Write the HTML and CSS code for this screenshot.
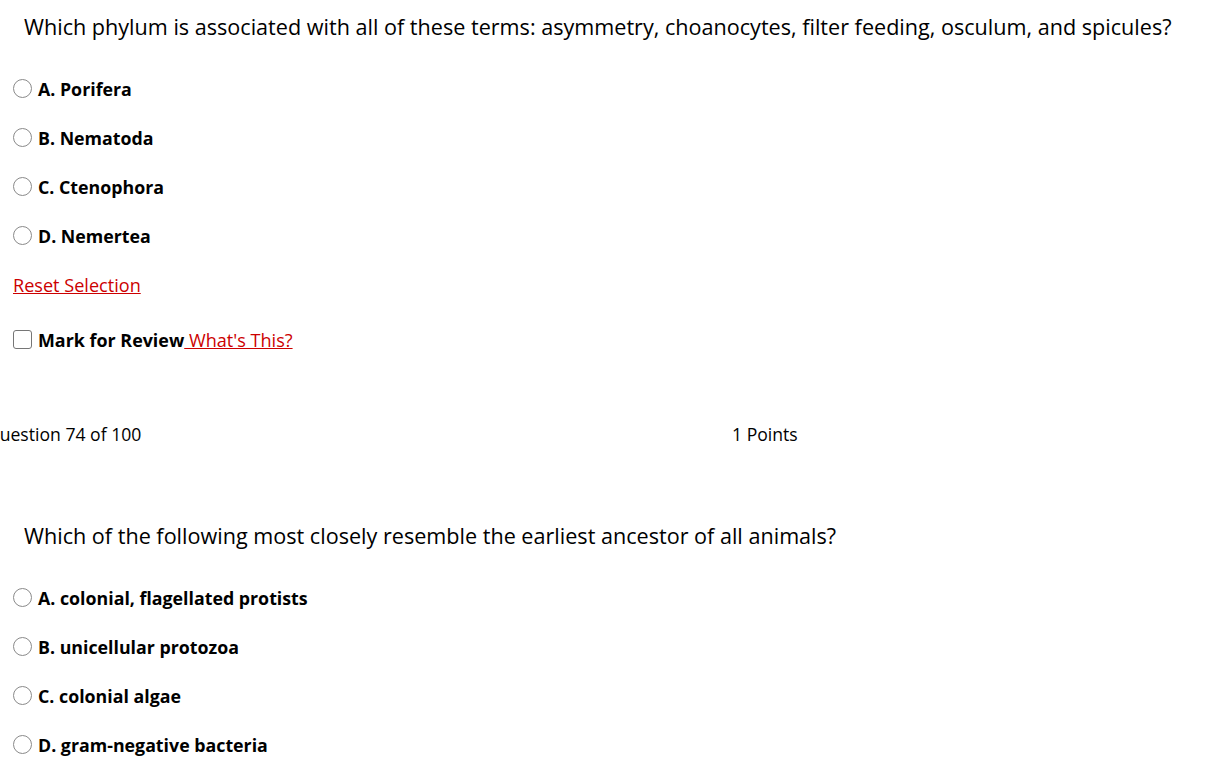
FILE: index.html
```html
<!DOCTYPE html>
<html lang="en">
<head>
    <meta charset="UTF-8">
    <meta name="viewport" content="width=device-width, initial-scale=1.0">
    <title>Quiz</title>
    <link rel="stylesheet" href="styles.css">
</head>
<body>
    <div class="question">
        <p class="question-text">Which phylum is associated with all of these terms: asymmetry, choanocytes, filter feeding, osculum, and spicules?</p>
        <label class="option"><input type="radio" name="q73"> A. Porifera</label>
        <label class="option"><input type="radio" name="q73"> B. Nematoda</label>
        <label class="option"><input type="radio" name="q73"> C. Ctenophora</label>
        <label class="option"><input type="radio" name="q73"> D. Nemertea</label>
        <div class="reset"><a href="#">Reset Selection</a></div>
        <div class="review">
            <label><input type="checkbox"> Mark for Review</label><a href="#">&nbsp;What's This?</a>
        </div>
    </div>

    <div class="question">
        <div class="q-header">
            <span class="q-num">Question 74 of 100</span>
            <span class="q-points">1 Points</span>
        </div>
        <p class="question-text">Which of the following most closely resemble the earliest ancestor of all animals?</p>
        <label class="option"><input type="radio" name="q74"> A. colonial, flagellated protists</label>
        <label class="option"><input type="radio" name="q74"> B. unicellular protozoa</label>
        <label class="option"><input type="radio" name="q74"> C. colonial algae</label>
        <label class="option"><input type="radio" name="q74"> D. gram-negative bacteria</label>
    </div>
</body>
</html>
```

FILE: styles.css
```css
body {
    font-family: "Open Sans", "Noto Sans", sans-serif;
    margin: 0;
    padding: 0 13px;
    background-color: #fff;
    color: #000;
    overflow: hidden;
}
.question-text {
    margin: 12px 0 22px;
    padding-left: 11px;
    font-size: 21.6px;
    line-height: 30px;
}
.option {
    display: flex;
    align-items: center;
    height: 49px;
    padding-top: 1px;
    box-sizing: border-box;
    font-size: 17.8px;
    font-weight: bold;
}
.option input,
.review input {
    appearance: none;
    width: 19px;
    height: 19px;
    margin: 0 6px 0 0;
    border: 1px solid #8a8a8a;
    border-radius: 50%;
    background: #fff;
}
.option input {
    margin-top: -1px;
}
.review input {
    border-radius: 3px;
    border-color: #767676;
}
.reset {
    display: flex;
    align-items: center;
    height: 49px;
    font-size: 18.1px;
}
a {
    color: #cc0000;
    text-decoration: underline;
}
.review {
    display: flex;
    align-items: center;
    height: 49px;
    margin-top: 6px;
    font-size: 17.9px;
}
.review a {
    font-size: 18.1px;
}
.review label {
    display: flex;
    align-items: center;
    font-weight: bold;
    text-decoration: underline;
    text-decoration-color: transparent;
}
.q-header {
    display: flex;
    align-items: center;
    height: 49px;
    margin: 45px 0 0 -27px;
    font-size: 17.6px;
}
.q-num {
    width: 746px;
}
.q-header + .question-text {
    margin-top: 63px;
}
```
